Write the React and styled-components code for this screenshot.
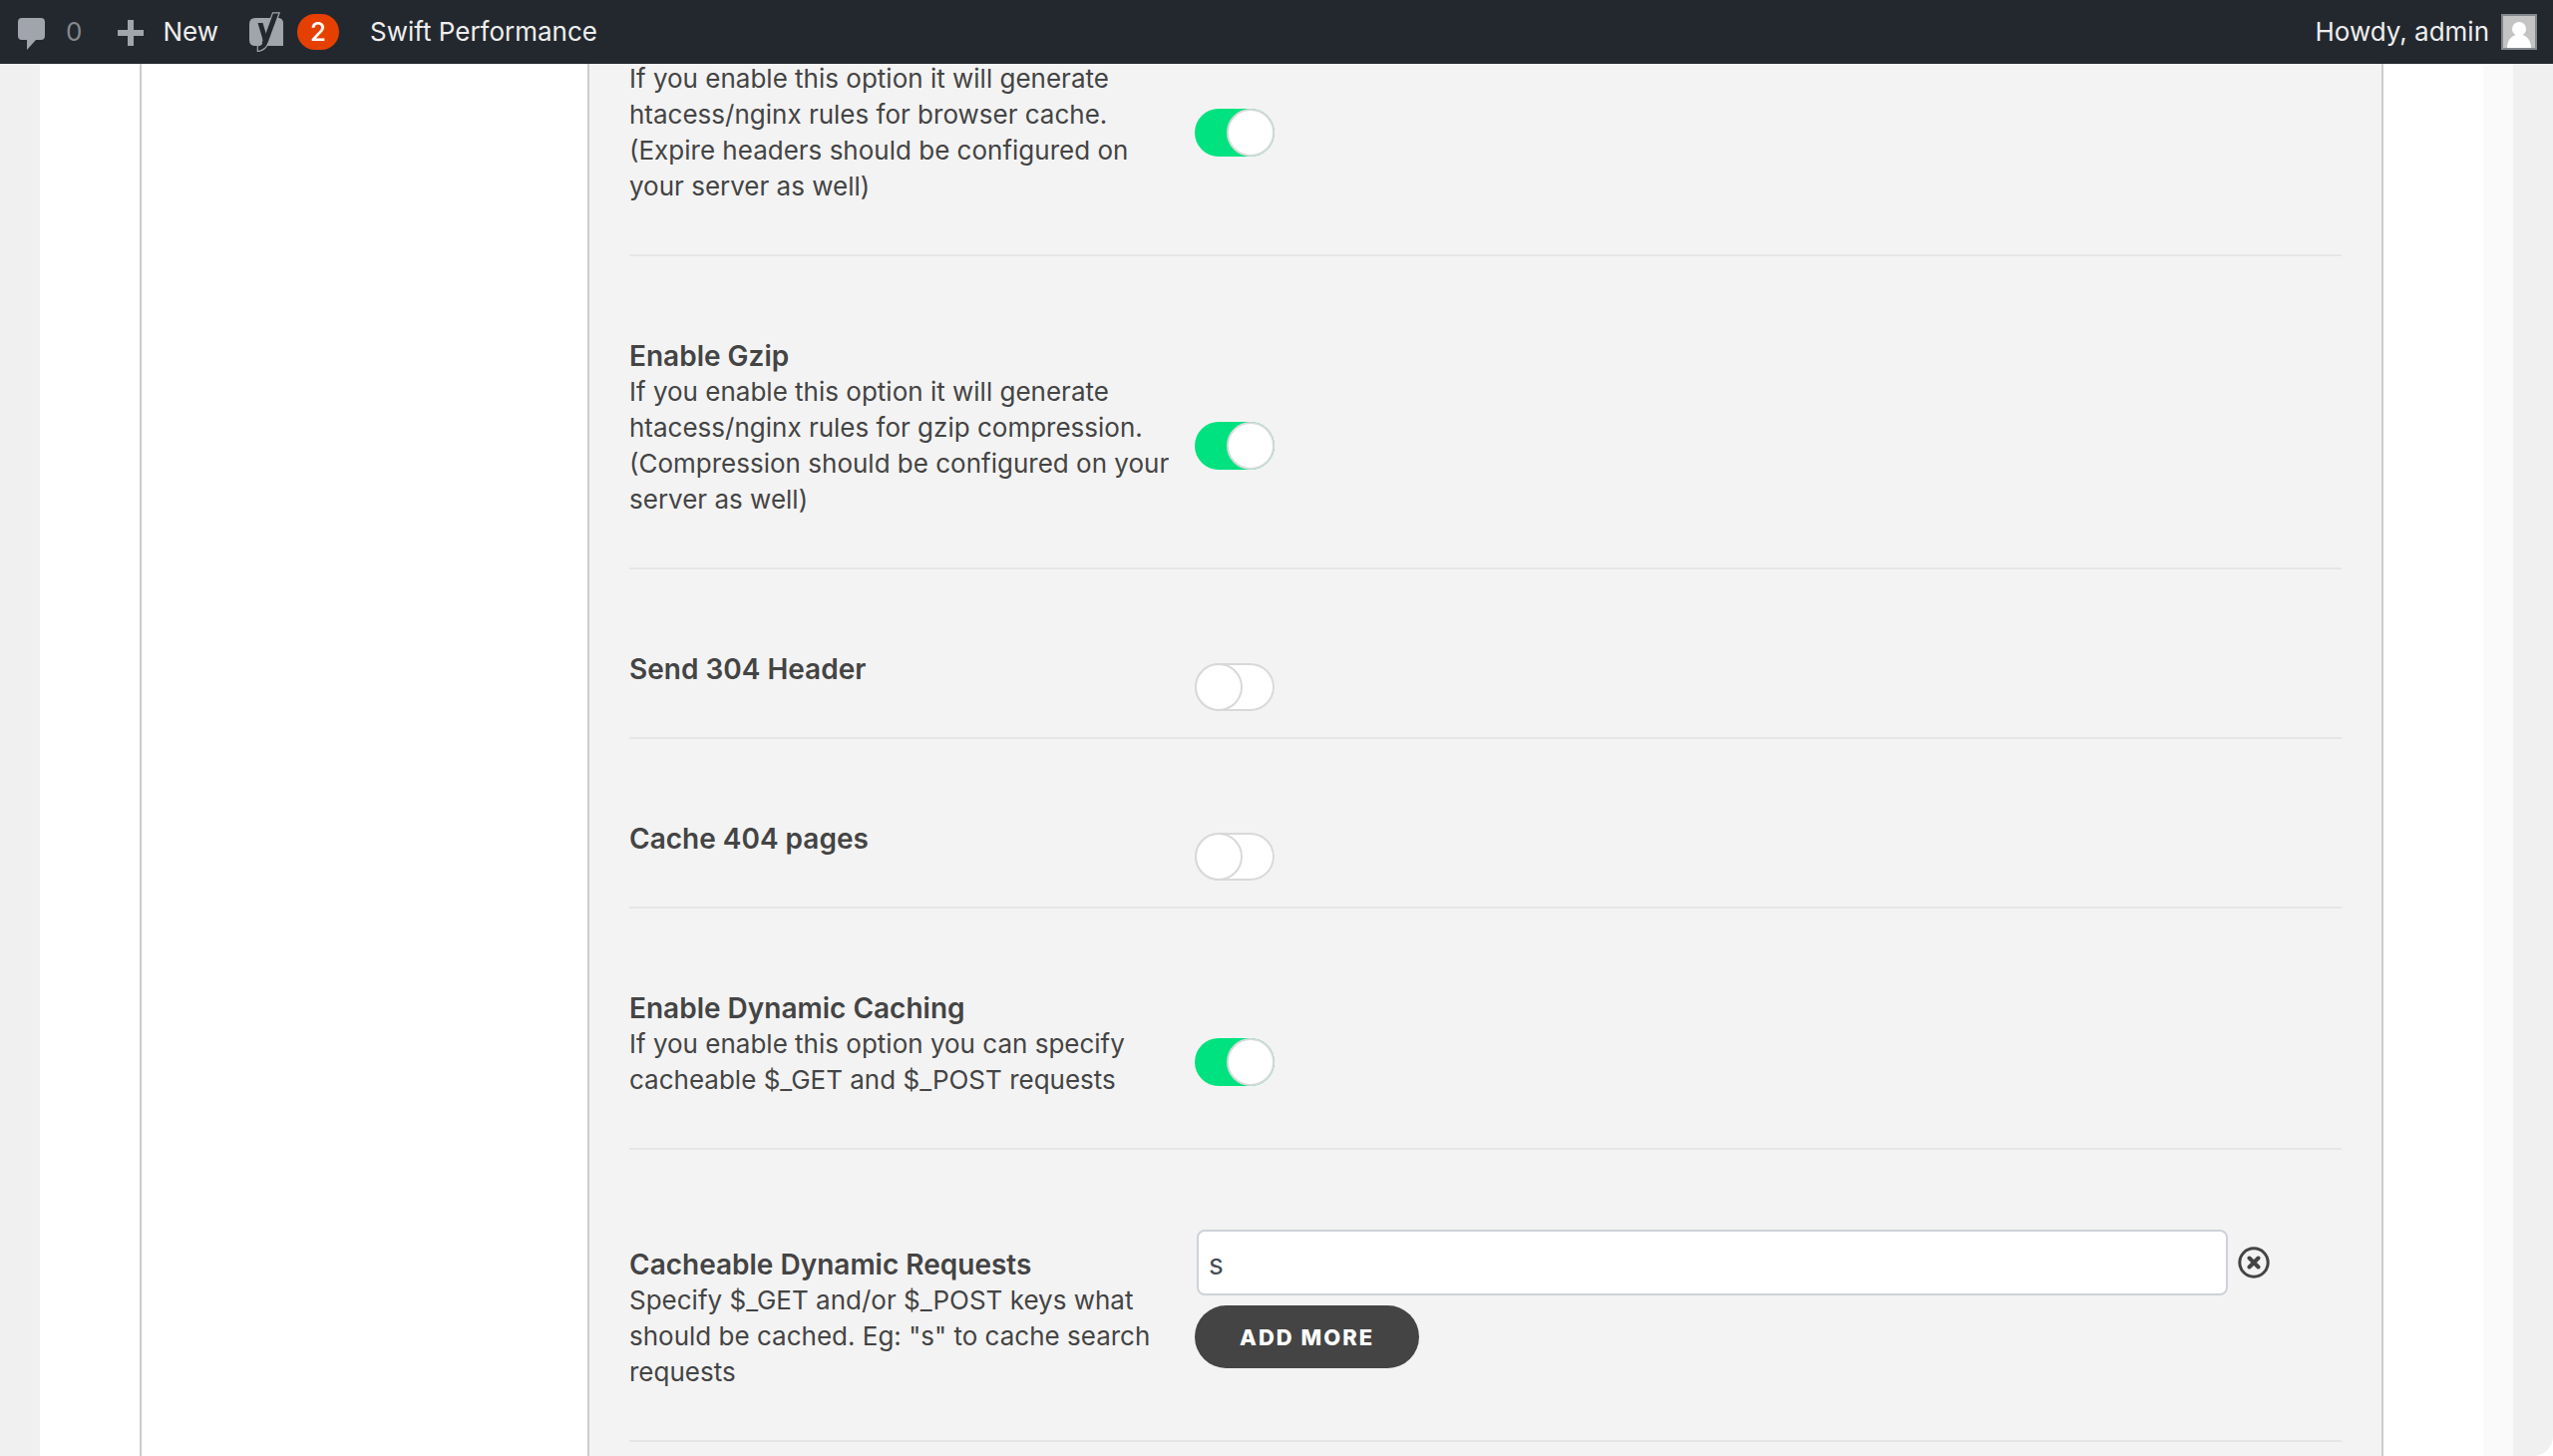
import React, { useState } from 'react';
import styled, { createGlobalStyle } from 'styled-components';

const GlobalStyle = createGlobalStyle`
  *, *::before {
    box-sizing: border-box;
  }
  html, body {
    margin: 0;
    background: #fff;
    overflow: hidden;
  }
  body, button, input {
    font-family: Inter, "Liberation Sans", sans-serif;
  }
`

const AdminBar = styled.header`
  position: fixed;
  top: 0;
  left: 0;
  right: 0;
  z-index: 10;
  height: 64px;
  padding: 0 16px;
  display: flex;
  align-items: center;
  justify-content: space-between;
  background: #23282f;
`

const BarGroup = styled.nav`
  display: flex;
  align-items: center;
  gap: 31px;
`

const BarLink = styled.a`
  display: flex;
  align-items: center;
  gap: ${({ $gap }) => $gap || 16}px;
  color: ${({ $muted }) => ($muted ? '#85898e' : '#eee')};
  font-size: 26px;
  line-height: 64px;
  text-decoration: none;
`

const Count = styled.span`
  width: 42px;
  height: 36px;
  border-radius: 18px;
  background: #e64000;
  color: #fff;
  font-size: 26px;
  font-weight: 500;
  line-height: 36px;
  text-align: center;
`

const Page = styled.div`
  min-height: 100vh;
  padding: 0 40px;
  display: flex;
  background: #f0f0f0;
  border-radius: 0 0 20px 0;
`

const Wrapper = styled.div`
  flex: 1;
  display: flex;
  padding: 0 100px;
  background: #fff;
  border-right: 30px solid #fafafa;
`

const SideMenu = styled.aside`
  width: 449px;
  border-left: 2px solid #ccc;
`

const Panel = styled.main`
  flex: 1;
  padding: 37px 40px 0;
  background: #f3f3f3;
  border-left: 2px solid #ccc;
  border-right: 2px solid #ccc;
`

const Row = styled.section`
  display: grid;
  grid-template-columns: 567px 1fr;
  align-items: ${({ $align }) => $align || 'center'};
  padding: ${({ $continued }) => ($continued ? 0 : 58)}px 0 26px;
  border-bottom: 2px solid #e6e6e6;
`

const RowText = styled.div`
  padding: 24px 20px 24px 0;
  color: #444;
  font-size: 26px;
  line-height: 36px;
`

const Title = styled.label`
  display: block;
  font-size: 28px;
  font-weight: 600;
`

const Description = styled.p`
  margin: 0;
`

const Control = styled.div`
  display: flex;
  padding-top: ${({ $continued }) => ($continued ? 0 : 36)}px;
`

const Switch = styled.input`
  appearance: none;
  width: 80px;
  height: 48px;
  margin: 0;
  display: flex;
  justify-content: flex-start;
  border-radius: 24px;
  background: #fff;
  box-shadow: inset 0 0 0 2px #d9d9d9;
  cursor: pointer;

  &::before {
    content: '';
    width: 48px;
    height: 48px;
    border: 2px solid #d9d9d9;
    border-radius: 50%;
    background: #fff;
  }

  &:checked {
    justify-content: flex-end;
    background: #00e27f;
    box-shadow: none;
  }
`

const FieldList = styled.div`
  display: flex;
  flex-direction: column;
  align-items: flex-start;
  gap: 10px;
  padding: 22px 0 46px;
`

const FieldLine = styled.div`
  width: 100%;
  display: flex;
  align-items: center;
  gap: 10px;
  padding: 0 72px 0 2px;
`

const TextInput = styled.input`
  flex: 1;
  height: 66px;
  padding: 4px 10px 0;
  border: 2px solid #ced2d8;
  border-radius: 8px;
  background: #fff;
  color: #444a52;
  font-size: 28px;
`

const IconButton = styled.button`
  width: 32px;
  height: 32px;
  padding: 0;
  border: 0;
  background: none;
  cursor: pointer;
`

const AddButton = styled.button`
  height: 63px;
  padding: 0 45px;
  border: 0;
  border-radius: 32px;
  background: #444;
  color: #fff;
  font-size: 22px;
  font-weight: 800;
  letter-spacing: 2px;
  text-transform: uppercase;
  cursor: pointer;
`

function CommentIcon() {
  return (
    <svg width="30" height="36" viewBox="0 0 30 36" fill="#a1a4ac" aria-hidden="true">
      <path d="M6 4h19a4 4 0 0 1 4 4v14a4 4 0 0 1-4 4h-5L11 36V26H6a4 4 0 0 1-4-4V8a4 4 0 0 1 4-4z" />
    </svg>
  )
}

function PlusIcon() {
  return (
    <svg width="34" height="28" viewBox="0 0 34 28" fill="#a1a4ac" aria-hidden="true">
      <path d="M15 2h6v10h10v6H21v10h-6V18H5v-6h10z" />
    </svg>
  )
}

function YoastIcon() {
  return (
    <svg width="34" height="40" viewBox="0 0 34 40" aria-hidden="true">
      <path fill="#a1a4ac" d="M6 6h24q4 1 4 5v23H6q-6 0-6-6V12q0-6 6-6z" />
      <path
        fill="#23282f"
        stroke="#a1a4ac"
        strokeWidth="1.200"
        d="M23.500 .8h6.700L19.500 30q-3 9-11.200 9.500V34q4.500-.5 4.700-4.500z"
      />
      <path fill="#23282f" d="M8.500 11h5l3.300 11 2.200 4-3.500 7-2.800-2q1.300-2 .3-5z" />
    </svg>
  )
}

function Avatar() {
  return (
    <svg width="36" height="36" viewBox="0 0 36 36" aria-hidden="true">
      <path fill="#82878c" d="M0 0h36v36H0z" />
      <path fill="#c4c4c4" d="M2 2h32v32H2z" />
      <circle cx="18" cy="15" r="7" fill="#fff" />
      <path fill="#fff" d="M6 34c0-7 4-12 9-13h6c5 1 9 6 9 13z" />
    </svg>
  )
}

function RemoveIcon() {
  return (
    <svg width="32" height="32" viewBox="0 0 32 32" fill="none" stroke="#444" aria-hidden="true">
      <circle cx="16" cy="16" r="14.200" strokeWidth="3" />
      <path d="M11.500 11.500l9 9M20.500 11.500l-9 9" strokeWidth="4" strokeLinecap="round" />
    </svg>
  )
}

const options = [
  {
    id: 'browser-cache',
    text: 'If you enable this option it will generate htacess/nginx rules for browser cache. (Expire headers should be configured on your server as well)',
    on: true,
  },
  {
    id: 'gzip',
    title: 'Enable Gzip',
    text: 'If you enable this option it will generate htacess/nginx rules for gzip compression. (Compression should be configured on your server as well)',
    on: true,
  },
  { id: '304-header', title: 'Send 304 Header', on: false },
  { id: 'cache-404', title: 'Cache 404 pages', on: false },
  {
    id: 'dynamic-caching',
    title: 'Enable Dynamic Caching',
    text: 'If you enable this option you can specify cacheable $_GET and $_POST requests',
    on: true,
  },
]

function Option({ id, title, text, on }) {
  const [checked, setChecked] = useState(on)

  return (
    <Row $continued={!title}>
      <RowText>
        {title && <Title htmlFor={id}>{title}</Title>}
        {text && <Description id={`${id}-text`}>{text}</Description>}
      </RowText>
      <Control $continued={!title}>
        <Switch
          id={id}
          type="checkbox"
          role="switch"
          aria-labelledby={title ? undefined : `${id}-text`}
          checked={checked}
          onChange={() => setChecked(!checked)}
        />
      </Control>
    </Row>
  )
}

function DynamicRequests() {
  const [keys, setKeys] = useState(['s'])

  const update = (index, value) => setKeys(keys.map((key, i) => (i === index ? value : key)))
  const remove = index => setKeys(keys.filter((key, i) => i !== index))

  return (
    <Row $align="end">
      <RowText>
        <Title htmlFor="request-0">Cacheable Dynamic Requests</Title>
        <Description>
          Specify $_GET and/or $_POST keys what should be cached. Eg: "s" to cache search requests
        </Description>
      </RowText>
      <FieldList>
        {keys.map((key, index) => (
          <FieldLine key={index}>
            <TextInput
              id={`request-${index}`}
              type="text"
              value={key}
              onChange={e => update(index, e.target.value)}
            />
            <IconButton type="button" aria-label="Remove" onClick={() => remove(index)}>
              <RemoveIcon />
            </IconButton>
          </FieldLine>
        ))}
        <AddButton type="button" onClick={() => setKeys([...keys, ''])}>Add more</AddButton>
      </FieldList>
    </Row>
  )
}

export default function App() {
  return (
    <>
      <GlobalStyle />
      <AdminBar>
        <BarGroup>
          <BarLink href="#comments" $muted $gap={20}><CommentIcon />0</BarLink>
          <BarLink href="#new"><PlusIcon />New</BarLink>
          <BarLink href="#seo" $gap={14}><YoastIcon /><Count>2</Count></BarLink>
          <BarLink href="#swift">Swift Performance</BarLink>
        </BarGroup>
        <BarLink href="#profile" $gap={12}>Howdy, admin<Avatar /></BarLink>
      </AdminBar>
      <Page>
        <Wrapper>
          <SideMenu />
          <Panel>
            {options.map(option => (
              <Option key={option.id} {...option} />
            ))}
            <DynamicRequests />
          </Panel>
        </Wrapper>
      </Page>
    </>
  )
}
